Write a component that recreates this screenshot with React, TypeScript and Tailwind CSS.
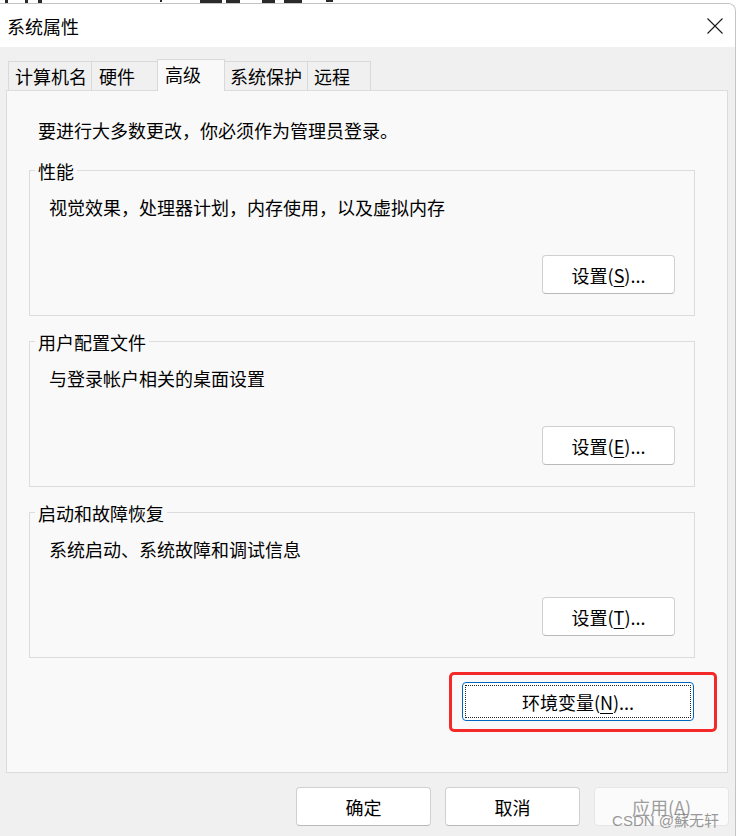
import { FC } from "react";

const tabs = [
  { label: "计算机名", w: "w-[83px]", pl: "pl-[6px]" },
  { label: "硬件", w: "w-[66px]", pl: "pl-[7px]" },
  { label: "高级", w: "w-[68px]", pl: "pl-[7px]", active: true },
  { label: "系统保护", w: "w-[82px]", pl: "pl-[5px]" },
  { label: "远程", w: "w-[64px]", pl: "pl-[6px]" },
];

const groups = [
  { title: "性能", desc: "视觉效果，处理器计划，内存使用，以及虚拟内存", key: "S" },
  { title: "用户配置文件", desc: "与登录帐户相关的桌面设置", key: "E" },
  { title: "启动和故障恢复", desc: "系统启动、系统故障和调试信息", key: "T" },
];

const Btn: FC<{ children: React.ReactNode; className?: string; disabled?: boolean }> = ({
  children,
  className = "",
  disabled,
}) => (
  <button
    className={
      "flex h-[39px] items-center justify-center rounded-[4px] border leading-none " +
      (disabled
        ? "border-[#e6e6e6] bg-[#fbfbfb] text-[#9d9d9d] "
        : "border-[#d0d0d0] border-b-[#b9b9b9] bg-white text-black ") +
      className
    }
  >
    {children}
  </button>
);

export default function App() {
  return (
    <div className="flex h-[836px] w-[736px] flex-col overflow-hidden bg-white font-['Noto_Sans_CJK_SC',sans-serif] text-[18px] text-black">
      {/* window behind, cut off */}
      <svg className="h-[3px] w-[736px] shrink-0" viewBox="0 0 736 3">
        <g fill="#2a2a2a">
          <rect x="5" y="0" width="3" height="3" />
          <rect x="25" y="0" width="3" height="3" />
          <rect x="38" y="0" width="4" height="3" />
          <rect x="160" y="0" width="2" height="2" />
          <rect x="200" y="0" width="22" height="3" />
          <rect x="226" y="0" width="14" height="3" />
          <rect x="262" y="0" width="13" height="3" />
          <rect x="284" y="0" width="18" height="3" />
          <rect x="326" y="0" width="7" height="2" />
        </g>
      </svg>

      <div className="flex flex-1 flex-col overflow-hidden rounded-tr-[8px] border-t border-r border-[#c4c4c4] bg-[#f0f0f0]">
        {/* title bar */}
        <div className="flex h-[43px] shrink-0 items-center justify-between bg-white pl-[7px] pr-[12px]">
          <span className="leading-[24px]">系统属性</span>
          <svg width="16" height="16" viewBox="0 0 16 16" fill="none" stroke="#1a1a1a" strokeWidth="1.1">
            <path d="M0.5 0.5 L15.5 15.5 M15.5 0.5 L0.5 15.5" />
          </svg>
        </div>

        <div className="flex flex-col px-[6px] pt-[12px]">
          {/* tabs */}
          <div className="relative z-10 ml-[2px] flex h-[31px] items-end">
            {tabs.map((t, i) => (
              <div
                key={t.label}
                className={
                  t.active
                    ? `${t.w} ${t.pl} -mb-px flex h-[32px] items-center border-x border-t border-[#d9d9d9] bg-[#f9f9f9] pb-[3px] leading-[24px]`
                    : `${t.w} ${t.pl} flex h-[29px] items-center border-t border-l border-[#d9d9d9] bg-[#f0f0f0] leading-[24px] ${
                        i === tabs.length - 1 ? "border-r" : ""
                      } ${tabs[i - 1]?.active ? "border-l-0" : ""}`
                }
              >
                {t.label}
              </div>
            ))}
          </div>

          {/* tab panel */}
          <div className="flex h-[683px] w-[722px] flex-col border border-[#dcdcdc] bg-[#f9f9f9] pl-[22px] pr-[32px] pt-[27px]">
            <p className="pl-[9px] leading-[24px]">要进行大多数更改，你必须作为管理员登录。</p>

            {groups.map((g, i) => (
              <div
                key={g.title}
                className={`flex h-[146px] flex-col border border-[#dcdcdc] ${i === 0 ? "mt-[28px]" : "mt-[25px]"}`}
              >
                <span className="-mt-[12px] ml-[5px] w-fit bg-[#f9f9f9] px-[3px] leading-[24px]">{g.title}</span>
                <p className="mt-[12px] pl-[19px] leading-[24px]">{g.desc}</p>
                <div className="mt-[36px] flex justify-end pr-[19px]">
                  <Btn className="w-[133px]">
                    设置(<span className="underline underline-offset-[3px]">{g.key}</span>)...
                  </Btn>
                </div>
              </div>
            ))}

            <div className="mt-[24px] flex justify-end pr-[1px]">
              <div className="relative">
                <div className="absolute -left-[13px] -top-[10px] h-[60px] w-[268px] rounded-[5px] border-[3px] border-[#f42a2a]" />
                <button className="relative flex h-[39px] w-[232px] items-center justify-center rounded-[4px] border border-[#0067c0] bg-white leading-none">
                  <span className="absolute inset-[2px] border border-dotted border-[#222]" />
                  环境变量(<span className="underline underline-offset-[3px]">N</span>)...
                </button>
              </div>
            </div>
          </div>

          {/* footer buttons */}
          <div className="relative mt-[14px] flex justify-end gap-[14px]">
            <Btn className="w-[135px]">确定</Btn>
            <Btn className="w-[135px]">取消</Btn>
            <Btn className="w-[135px]" disabled>
              应用(A)
            </Btn>
            <span className="absolute right-[10px] top-[26px] font-['Liberation_Sans','Noto_Sans_CJK_SC',sans-serif] text-[15px] leading-none text-[#7d7d7d]/80">
              CSDN @蘇无轩
            </span>
          </div>
        </div>
      </div>
    </div>
  );
}
